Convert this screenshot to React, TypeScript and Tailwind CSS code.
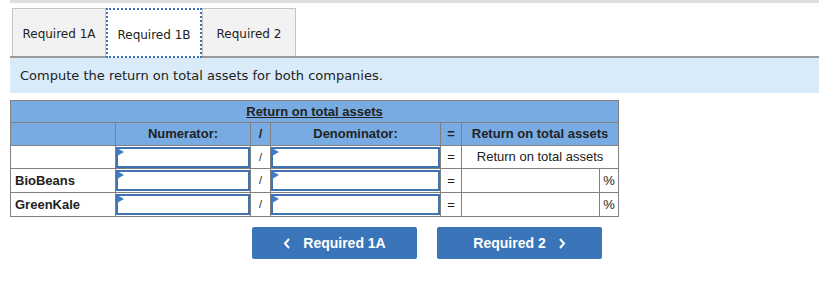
import React from "react";

const Inp = () => (
  <div className="relative h-[21px] border-2 border-[#3f73b3] bg-white">
    <svg className="absolute left-[-1px] top-[-1px]" width="7" height="8" viewBox="0 0 7 8">
      <polygon points="0,0 7,4 0,8" fill="#3f7cc4" />
    </svg>
  </div>
);

export default function App() {
  const cell = "border border-[#808080] p-0";
  return (
    <div className="w-[835px] h-[299px] bg-white" style={{ fontFamily: "'Liberation Sans', Arial, sans-serif" }}>
      <div className="ml-[10px] w-[809px] h-[3px] bg-[#dedede]" />
      <div className="ml-[10px] w-[809px] mt-[5px]">
        <div className="flex items-end h-[50px] border-b-2 border-[#9a9a9a]" style={{ fontFamily: "'DejaVu Sans', Verdana, sans-serif" }}>
          <div className="ml-[2px] w-[94px] h-[48px] pt-[3px] bg-[#f2f2f2] border border-b-0 border-[#c4c4c4] flex items-center justify-center text-[12px] text-[#222]">Required 1A</div>
          <div className="w-[96px] h-[50px] pt-[3px] bg-white border-2 border-dotted border-[#3b72b6] flex items-center justify-center text-[12px] text-[#222] -mb-[2px]">Required 1B</div>
          <div className="w-[94px] h-[48px] pt-[3px] bg-[#f2f2f2] border border-b-0 border-[#c4c4c4] flex items-center justify-center text-[12px] text-[#222]">Required 2</div>
        </div>
        <div className="h-[35px] bg-[#d9ebf9] flex items-center pl-[10px] text-[13px] text-[#222]" style={{ fontFamily: "'DejaVu Sans', Verdana, sans-serif" }}>
          Compute the return on total assets for both companies.
        </div>
      </div>
      <table className="ml-[10px] mt-[7px] border-collapse text-[13px] text-[#222] table-fixed" style={{ width: 608 }}>
        <colgroup>
          <col style={{ width: 105 }} />
          <col style={{ width: 135 }} />
          <col style={{ width: 20 }} />
          <col style={{ width: 170 }} />
          <col style={{ width: 21 }} />
          <col style={{ width: 138 }} />
          <col style={{ width: 19 }} />
        </colgroup>
        <tbody>
          <tr className="h-[22px] bg-[#78abe2]">
            <td colSpan={7} className={cell + " text-center font-bold"}>
              <span className="underline">Return on total assets</span>
            </td>
          </tr>
          <tr className="h-[23px] bg-[#78abe2] font-bold">
            <td className={cell}></td>
            <td className={cell + " text-center"}>Numerator:</td>
            <td className={cell + " text-center"}>/</td>
            <td className={cell + " text-center"}>Denominator:</td>
            <td className={cell + " text-center"}>=</td>
            <td colSpan={2} className={cell + " text-center"}>Return on total assets</td>
          </tr>
          <tr className="h-[23px] bg-white">
            <td className={cell}></td>
            <td className={cell}><Inp /></td>
            <td className={cell + " text-center text-[11px]"}>/</td>
            <td className={cell}><Inp /></td>
            <td className={cell + " text-center"}>=</td>
            <td colSpan={2} className={cell + " text-center"}>Return on total assets</td>
          </tr>
          {["BioBeans", "GreenKale"].map((n) => (
            <tr key={n} className="h-[24px] bg-white">
              <td className={cell + " pl-[4px] font-bold"}>{n}</td>
              <td className={cell}><Inp /></td>
              <td className={cell + " text-center text-[11px]"}>/</td>
              <td className={cell}><Inp /></td>
              <td className={cell + " text-center"}>=</td>
              <td className={cell}></td>
              <td className={cell + " text-center"}>%</td>
            </tr>
          ))}
        </tbody>
      </table>
      <div className="flex ml-[252px] mt-[10px] gap-[20px]">
        <div className="w-[165px] h-[32px] bg-[#3a75b9] rounded-[2px] flex items-center justify-center text-white font-bold text-[14px] gap-[12px]">
          <svg width="8" height="11" viewBox="0 0 8 11"><path d="M6 1 L2 5.5 L6 10" stroke="white" strokeWidth="2" fill="none" /></svg>
          <span>Required 1A</span>
        </div>
        <div className="w-[165px] h-[32px] bg-[#3a75b9] rounded-[2px] flex items-center justify-center text-white font-bold text-[14px] gap-[12px]">
          <span>Required 2</span>
          <svg width="8" height="11" viewBox="0 0 8 11"><path d="M2 1 L6 5.5 L2 10" stroke="white" strokeWidth="2" fill="none" /></svg>
        </div>
      </div>
    </div>
  );
}
